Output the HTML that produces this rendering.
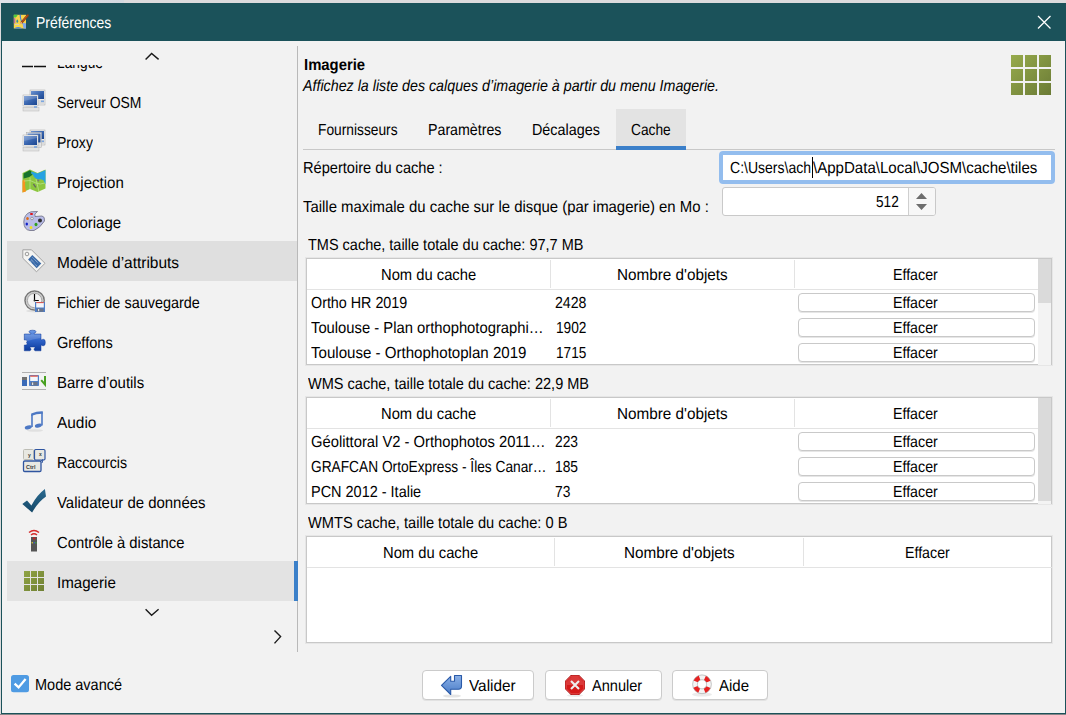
<!DOCTYPE html><html><head><meta charset="utf-8"><style>
html,body{margin:0;padding:0;width:1066px;height:715px;overflow:hidden;background:#dcdbdd}
.t{position:absolute;font-family:"Liberation Sans",sans-serif;font-size:16px;line-height:20px;white-space:nowrap;text-rendering:geometricPrecision}
svg{position:absolute;overflow:visible}
</style></head><body>
<div style="position:absolute;left:0px;top:714px;width:1066px;height:1px;background:#878587"></div>
<div style="position:absolute;left:0px;top:0px;width:124px;height:3px;background:linear-gradient(90deg,#dfe3ea,#d3d8df)"></div>
<div style="position:absolute;left:1px;top:3px;width:1065px;height:711px;background:#1b525a"></div>
<div style="position:absolute;left:2px;top:41px;width:1063px;height:672px;background:#f2f2f2"></div>
<div class="t" style="left:36.40px;top:14px;color:#fff;transform:scaleX(0.8721);transform-origin:0 0;">Préférences</div>
<div style="position:absolute;left:297px;top:46px;width:1px;height:606px;background:#b9b9b9"></div>
<div style="position:absolute;left:7px;top:241px;width:290px;height:40px;background:#dfdfdf"></div>
<div style="position:absolute;left:7px;top:561px;width:287px;height:40px;background:#e3e3e3"></div>
<div style="position:absolute;left:294px;top:561px;width:4px;height:40px;background:#3b80c9"></div>
<div style="position:absolute;left:2px;top:65px;width:295px;height:560px;overflow:hidden">
<div class="t" style="left:54.60px;top:-11px;color:#000;transform:scaleX(0.8611);transform-origin:0 0;">Langue</div>
<div class="t" style="left:54.60px;top:29px;color:#000;transform:scaleX(0.8711);transform-origin:0 0;">Serveur OSM</div>
<div class="t" style="left:54.60px;top:69px;color:#000;transform:scaleX(0.8780);transform-origin:0 0;">Proxy</div>
<div class="t" style="left:54.60px;top:109px;color:#000;transform:scaleX(0.9380);transform-origin:0 0;">Projection</div>
<div class="t" style="left:54.60px;top:149px;color:#000;transform:scaleX(0.9348);transform-origin:0 0;">Coloriage</div>
<div class="t" style="left:54.60px;top:189px;color:#000;transform:scaleX(0.9667);transform-origin:0 0;">Modèle d’attributs</div>
<div class="t" style="left:54.60px;top:229px;color:#000;transform:scaleX(0.9025);transform-origin:0 0;">Fichier de sauvegarde</div>
<div class="t" style="left:54.60px;top:269px;color:#000;transform:scaleX(0.9131);transform-origin:0 0;">Greffons</div>
<div class="t" style="left:54.60px;top:309px;color:#000;transform:scaleX(0.9333);transform-origin:0 0;">Barre d’outils</div>
<div class="t" style="left:54.60px;top:349px;color:#000;transform:scaleX(0.9634);transform-origin:0 0;">Audio</div>
<div class="t" style="left:54.60px;top:389px;color:#000;transform:scaleX(0.8848);transform-origin:0 0;">Raccourcis</div>
<div class="t" style="left:54.60px;top:429px;color:#000;transform:scaleX(0.9346);transform-origin:0 0;">Validateur de données</div>
<div class="t" style="left:54.60px;top:469px;color:#000;transform:scaleX(0.9246);transform-origin:0 0;">Contrôle à distance</div>
<div class="t" style="left:54.60px;top:509px;color:#000;transform:scaleX(0.9452);transform-origin:0 0;">Imagerie</div>
</div>
<div class="t" style="left:303.60px;top:56px;font-weight:bold;color:#000;transform:scaleX(0.9288);transform-origin:0 0;">Imagerie</div>
<div class="t" style="left:303.49px;top:77px;font-style:italic;color:#000;transform:scaleX(0.8910);transform-origin:0 0;">Affichez la liste des calques d’imagerie à partir du menu Imagerie.</div>
<div style="position:absolute;left:303px;top:149px;width:752px;height:1px;background:#c8c8c8"></div>
<div style="position:absolute;left:616px;top:109px;width:70px;height:37px;background:#e3e3e3"></div>
<div style="position:absolute;left:616px;top:146px;width:70px;height:4px;background:#3b7fc9"></div>
<div class="t" style="left:317.60px;top:121px;color:#000;transform:scaleX(0.8602);transform-origin:0 0;">Fournisseurs</div>
<div class="t" style="left:427.60px;top:121px;color:#000;transform:scaleX(0.8880);transform-origin:0 0;">Paramètres</div>
<div class="t" style="left:532.10px;top:121px;color:#000;transform:scaleX(0.8974);transform-origin:0 0;">Décalages</div>
<div class="t" style="left:630.60px;top:121px;color:#000;transform:scaleX(0.8587);transform-origin:0 0;">Cache</div>
<div class="t" style="left:303.20px;top:159px;color:#000;transform:scaleX(0.9131);transform-origin:0 0;">Répertoire du cache :</div>
<div style="position:absolute;left:719px;top:151px;width:336px;height:33px;background:#fff;border-radius:4px;box-shadow:inset 0 0 0 4px #93bdee"></div>
<div class="t" style="left:729.60px;top:159px;color:#000;transform:scaleX(0.8763);transform-origin:0 0;">C:\Users\ach</div>
<div class="t" style="left:812.60px;top:159px;color:#000;transform:scaleX(0.9414);transform-origin:0 0;">\AppData\Local\JOSM\cache\tiles</div>
<div style="position:absolute;left:812px;top:157px;width:1px;height:21px;background:#000"></div>
<div class="t" style="left:302.60px;top:198px;color:#000;transform:scaleX(0.9312);transform-origin:0 0;">Taille maximale du cache sur le disque (par imagerie) en Mo :</div>
<div style="position:absolute;left:722px;top:187px;width:214px;height:29px;background:#fff;border:1px solid #c9c9c9;border-radius:3px;box-sizing:border-box"></div>
<div style="position:absolute;left:908px;top:188px;width:27px;height:27px;background:#f7f7f7;border-left:1px solid #cfcfcf;border-radius:0 2px 2px 0;box-sizing:border-box"></div>
<div class="t" style="left:875.50px;top:193px;color:#000;transform:scaleX(0.8519);transform-origin:0 0;">512</div>
<div class="t" style="left:308.10px;top:236px;color:#000;transform:scaleX(0.9053);transform-origin:0 0;">TMS cache, taille totale du cache: 97,7 MB</div>
<div style="position:absolute;left:305px;top:257px;width:748px;height:109px;background:#e6e6e6"></div>
<div style="position:absolute;left:306px;top:258px;width:746px;height:107px;background:#fff;box-shadow:inset 0 0 0 1px #c8c8c8"></div>
<div style="position:absolute;left:307px;top:289px;width:731px;height:1px;background:#e3e3e3"></div>
<div style="position:absolute;left:550px;top:260px;width:1px;height:28px;background:#e3e3e3"></div>
<div style="position:absolute;left:794px;top:260px;width:1px;height:28px;background:#e3e3e3"></div>
<div class="t" style="left:380.50px;top:266px;color:#000;transform:scaleX(0.9223);transform-origin:0 0;">Nom du cache</div>
<div class="t" style="left:616.65px;top:266px;color:#000;transform:scaleX(0.9543);transform-origin:0 0;">Nombre d'objets</div>
<div class="t" style="left:893.35px;top:266px;color:#000;transform:scaleX(0.8882);transform-origin:0 0;">Effacer</div>
<div style="position:absolute;left:1038px;top:259px;width:13px;height:106px;background:#f3f3f3"></div>
<div style="position:absolute;left:1038px;top:259px;width:13px;height:44px;background:#dadada"></div>
<div class="t" style="left:311.10px;top:294px;color:#000;transform:scaleX(0.8944);transform-origin:0 0;">Ortho HR 2019</div>
<div class="t" style="left:555.30px;top:294px;color:#000;transform:scaleX(0.8833);transform-origin:0 0;">2428</div>
<div style="position:absolute;left:798px;top:293px;width:237px;height:19px;background:#fff;border:1px solid #c9c9c9;border-radius:4px;box-sizing:border-box;box-shadow:0 1px 0 #e6e6e6"></div>
<div class="t" style="left:893.35px;top:294px;color:#000;transform:scaleX(0.8882);transform-origin:0 0;">Effacer</div>
<div class="t" style="left:311.10px;top:319px;color:#000;transform:scaleX(0.9238);transform-origin:0 0;">Toulouse - Plan orthophotographi…</div>
<div class="t" style="left:556.30px;top:319px;color:#000;transform:scaleX(0.8556);transform-origin:0 0;">1902</div>
<div style="position:absolute;left:798px;top:318px;width:237px;height:19px;background:#fff;border:1px solid #c9c9c9;border-radius:4px;box-sizing:border-box;box-shadow:0 1px 0 #e6e6e6"></div>
<div class="t" style="left:893.35px;top:319px;color:#000;transform:scaleX(0.8882);transform-origin:0 0;">Effacer</div>
<div class="t" style="left:311.10px;top:344px;color:#000;transform:scaleX(0.9424);transform-origin:0 0;">Toulouse - Orthophotoplan 2019</div>
<div class="t" style="left:556.20px;top:344px;color:#000;transform:scaleX(0.8500);transform-origin:0 0;">1715</div>
<div style="position:absolute;left:798px;top:343px;width:237px;height:19px;background:#fff;border:1px solid #c9c9c9;border-radius:4px;box-sizing:border-box;box-shadow:0 1px 0 #e6e6e6"></div>
<div class="t" style="left:893.35px;top:344px;color:#000;transform:scaleX(0.8882);transform-origin:0 0;">Effacer</div>
<div class="t" style="left:308.10px;top:375px;color:#000;transform:scaleX(0.9081);transform-origin:0 0;">WMS cache, taille totale du cache: 22,9 MB</div>
<div style="position:absolute;left:305px;top:396px;width:748px;height:109px;background:#e6e6e6"></div>
<div style="position:absolute;left:306px;top:397px;width:746px;height:107px;background:#fff;box-shadow:inset 0 0 0 1px #c8c8c8"></div>
<div style="position:absolute;left:307px;top:428px;width:731px;height:1px;background:#e3e3e3"></div>
<div style="position:absolute;left:550px;top:399px;width:1px;height:28px;background:#e3e3e3"></div>
<div style="position:absolute;left:794px;top:399px;width:1px;height:28px;background:#e3e3e3"></div>
<div class="t" style="left:380.50px;top:405px;color:#000;transform:scaleX(0.9223);transform-origin:0 0;">Nom du cache</div>
<div class="t" style="left:616.65px;top:405px;color:#000;transform:scaleX(0.9543);transform-origin:0 0;">Nombre d'objets</div>
<div class="t" style="left:893.35px;top:405px;color:#000;transform:scaleX(0.8882);transform-origin:0 0;">Effacer</div>
<div style="position:absolute;left:1038px;top:398px;width:13px;height:106px;background:#f3f3f3"></div>
<div style="position:absolute;left:1038px;top:398px;width:13px;height:103px;background:#dadada"></div>
<div class="t" style="left:311.10px;top:433px;color:#000;transform:scaleX(0.9228);transform-origin:0 0;">Géolittoral V2 - Orthophotos 2011…</div>
<div class="t" style="left:554.90px;top:433px;color:#000;transform:scaleX(0.8630);transform-origin:0 0;">223</div>
<div style="position:absolute;left:798px;top:432px;width:237px;height:19px;background:#fff;border:1px solid #c9c9c9;border-radius:4px;box-sizing:border-box;box-shadow:0 1px 0 #e6e6e6"></div>
<div class="t" style="left:893.35px;top:433px;color:#000;transform:scaleX(0.8882);transform-origin:0 0;">Effacer</div>
<div class="t" style="left:311.10px;top:458px;color:#000;transform:scaleX(0.8575);transform-origin:0 0;">GRAFCAN OrtoExpress - Îles Canar…</div>
<div class="t" style="left:554.90px;top:458px;color:#000;transform:scaleX(0.8630);transform-origin:0 0;">185</div>
<div style="position:absolute;left:798px;top:457px;width:237px;height:19px;background:#fff;border:1px solid #c9c9c9;border-radius:4px;box-sizing:border-box;box-shadow:0 1px 0 #e6e6e6"></div>
<div class="t" style="left:893.35px;top:458px;color:#000;transform:scaleX(0.8882);transform-origin:0 0;">Effacer</div>
<div class="t" style="left:311.10px;top:483px;color:#000;transform:scaleX(0.9041);transform-origin:0 0;">PCN 2012 - Italie</div>
<div class="t" style="left:554.90px;top:483px;color:#000;transform:scaleX(0.8611);transform-origin:0 0;">73</div>
<div style="position:absolute;left:798px;top:482px;width:237px;height:19px;background:#fff;border:1px solid #c9c9c9;border-radius:4px;box-sizing:border-box;box-shadow:0 1px 0 #e6e6e6"></div>
<div class="t" style="left:893.35px;top:483px;color:#000;transform:scaleX(0.8882);transform-origin:0 0;">Effacer</div>
<div class="t" style="left:308.10px;top:514px;color:#000;transform:scaleX(0.9144);transform-origin:0 0;">WMTS cache, taille totale du cache: 0 B</div>
<div style="position:absolute;left:305px;top:535px;width:748px;height:109px;background:#e6e6e6"></div>
<div style="position:absolute;left:306px;top:536px;width:746px;height:107px;background:#fff;box-shadow:inset 0 0 0 1px #c8c8c8"></div>
<div style="position:absolute;left:307px;top:567px;width:745px;height:1px;background:#e3e3e3"></div>
<div style="position:absolute;left:554px;top:538px;width:1px;height:28px;background:#e3e3e3"></div>
<div style="position:absolute;left:803px;top:538px;width:1px;height:28px;background:#e3e3e3"></div>
<div class="t" style="left:382.83px;top:544px;color:#000;transform:scaleX(0.9223);transform-origin:0 0;">Nom du cache</div>
<div class="t" style="left:623.65px;top:544px;color:#000;transform:scaleX(0.9543);transform-origin:0 0;">Nombre d'objets</div>
<div class="t" style="left:905.02px;top:544px;color:#000;transform:scaleX(0.8882);transform-origin:0 0;">Effacer</div>
<div class="t" style="left:34.60px;top:676px;color:#000;transform:scaleX(0.9062);transform-origin:0 0;">Mode avancé</div>
<div style="position:absolute;left:422px;top:670px;width:112px;height:30px;background:#fff;border:1px solid #cbcbcb;border-radius:4px;box-sizing:border-box;box-shadow:0 1px 0 #e2e2e2"></div>
<div class="t" style="left:468.60px;top:677px;color:#000;transform:scaleX(0.9592);transform-origin:0 0;">Valider</div>
<div style="position:absolute;left:545px;top:670px;width:117px;height:30px;background:#fff;border:1px solid #cbcbcb;border-radius:4px;box-sizing:border-box;box-shadow:0 1px 0 #e2e2e2"></div>
<div class="t" style="left:591.60px;top:677px;color:#000;transform:scaleX(0.9107);transform-origin:0 0;">Annuler</div>
<div style="position:absolute;left:672px;top:670px;width:96px;height:30px;background:#fff;border:1px solid #cbcbcb;border-radius:4px;box-sizing:border-box;box-shadow:0 1px 0 #e2e2e2"></div>
<div class="t" style="left:718.60px;top:677px;color:#000;transform:scaleX(0.9375);transform-origin:0 0;">Aide</div>
<svg style="left:0;top:0" width="1066" height="715" viewBox="0 0 1066 715">
<defs>
<linearGradient id="scr" x1="0" y1="0" x2="1" y2="1"><stop offset="0" stop-color="#6f95d2"/><stop offset="0.5" stop-color="#3a66b0"/><stop offset="1" stop-color="#1a4590"/></linearGradient>
<linearGradient id="olive_b" gradientUnits="userSpaceOnUse" x1="1011" y1="55" x2="1051" y2="95"><stop offset="0" stop-color="#97ab4c"/><stop offset="1" stop-color="#6b7b36"/></linearGradient><linearGradient id="olive_s" gradientUnits="userSpaceOnUse" x1="24" y1="571" x2="44" y2="591"><stop offset="0" stop-color="#90a444"/><stop offset="1" stop-color="#6f8034"/></linearGradient>
<linearGradient id="puz" x1="0" y1="0" x2="0" y2="1"><stop offset="0" stop-color="#6f9be6"/><stop offset="0.5" stop-color="#2f63c8"/><stop offset="1" stop-color="#0c3a9c"/></linearGradient>
<linearGradient id="chk" x1="0" y1="0" x2="0" y2="1"><stop offset="0" stop-color="#2a6a90"/><stop offset="1" stop-color="#154868"/></linearGradient>
<linearGradient id="arr" x1="0" y1="0" x2="0" y2="1"><stop offset="0" stop-color="#8ab0e6"/><stop offset="1" stop-color="#4a7cc8"/></linearGradient>
<radialGradient id="clk" cx="0.5" cy="0.5" r="0.5"><stop offset="0.7" stop-color="#f2f2f2"/><stop offset="1" stop-color="#d0d0d0"/></radialGradient>
</defs>
<rect x="13.8" y="14.8" width="12.2" height="13.7" fill="#f7d44a"/>
<path d="M13.8 14.8 H17.8 Q17.2 16.5 15.8 17.4 L13.8 17.6 Z" fill="#4ccb40"/>
<path d="M13.8 18.2 H15.3 V23.4 H13.8 Z" fill="#b86fa0"/>
<ellipse cx="17.3" cy="21.2" rx="0.9" ry="1.6" fill="#3d8a98"/>
<path d="M19.6 14.8 H20.8 Q20.6 18 22 21 L21 21.5 Q19.6 18.5 19.6 14.8 Z" fill="#3f7fd8"/>
<path d="M22 22.5 Q24 23.5 26 23.2 V28.5 H23.5 Q23 25 22 22.5 Z" fill="#7fa8ea"/>
<path d="M14.5 28.5 Q15 26.8 18.5 27 Q21 27.3 22.5 28.5 Z" fill="#4a86e0"/>
<path d="M15 24 H19 V25 H15 Z" fill="#c8d0d8" opacity="0.8"/>
<path d="M27.6 15.4 L21.6 22.6" stroke="#984210" stroke-width="2.4" stroke-linecap="round"/>
<path d="M27.2 15.6 L22 21.8" stroke="#c8642a" stroke-width="0.7"/>
<circle cx="21.2" cy="23" r="0.9" fill="#e6b48a"/>
<path d="M1038 16L1050.5 28.5M1050.5 16L1038 28.5" stroke="#fff" stroke-width="1.25"/>
<path d="M145.6 59.4L151.6 53.4L158.6 59.4" stroke="#1a1a1a" stroke-width="1.4" fill="none"/>
<path d="M145.6 609.2L151.6 615.2L158.6 609.2" stroke="#1a1a1a" stroke-width="1.4" fill="none"/>
<path d="M274.5 630.4L280.6 636.6L274.5 643.4" stroke="#1a1a1a" stroke-width="1.4" fill="none"/>
<path d="M22 66.5h11M34 66.5h12" stroke="#111" stroke-width="1.6"/>
<rect x="30" y="90" width="15" height="15" fill="#ececec" stroke="#a8a8a8" stroke-width="0.5"/><rect x="31" y="91" width="13" height="8" fill="url(#scr)"/><rect x="31" y="100" width="13" height="4" fill="#dcdcdc"/><rect x="41" y="100.5" width="3" height="1.6" fill="#7aa6e0"/>
<rect x="23" y="95" width="15" height="11" fill="#f4f4f4"/><rect x="23" y="95" width="15" height="11" fill="none" stroke="#a8a8a8" stroke-width="0.5"/><rect x="24" y="96" width="13" height="9" fill="url(#scr)"/><path d="M24 101 L37 98 V96 H24Z" fill="#fff" opacity="0.18"/><path d="M26 106 H35 L36 107.5 H25Z" fill="#d8d8d8"/><rect x="23" y="107.5" width="16" height="3.5" fill="#e2e2e2" stroke="#b8b8b8" stroke-width="0.5"/><rect x="34" y="106.2" width="3" height="1.6" fill="#7aa6e0"/>
<rect x="30" y="130" width="15" height="15" fill="#ececec" stroke="#a8a8a8" stroke-width="0.5"/><rect x="31" y="131" width="13" height="8" fill="url(#scr)"/><rect x="31" y="140" width="13" height="4" fill="#dcdcdc"/><rect x="41" y="140.5" width="3" height="1.6" fill="#7aa6e0"/>
<rect x="26.5" y="132.5" width="15" height="15" fill="#ececec" stroke="#a8a8a8" stroke-width="0.5"/><rect x="27.5" y="133.5" width="13" height="9" fill="url(#scr)"/><rect x="27.5" y="143" width="13" height="4" fill="#dcdcdc"/>
<rect x="23" y="135" width="15" height="11" fill="#f4f4f4"/><rect x="23" y="135" width="15" height="11" fill="none" stroke="#a8a8a8" stroke-width="0.5"/><rect x="24" y="136" width="13" height="9" fill="url(#scr)"/><path d="M24 141 L37 138 V136 H24Z" fill="#fff" opacity="0.18"/><path d="M26 146 H35 L36 147.5 H25Z" fill="#d8d8d8"/><rect x="23" y="147.5" width="16" height="3.5" fill="#e2e2e2" stroke="#b8b8b8" stroke-width="0.5"/><rect x="34" y="146.2" width="3" height="1.6" fill="#7aa6e0"/>
<path d="M22.5 173 L30 169.5 L37.5 173 L45.5 169.5 L45.5 188.5 L37.5 192 L30 189 L22.5 192.5 Z" fill="#8cc63e"/>
<path d="M23.6 173.4 L29.8 170.3 L31.6 171.4 Q30.6 173.6 32.8 174.6 Q30 177.2 26.6 177.8 L23.6 178.6 Z" fill="#17732c"/>
<path d="M31.6 171.4 L37.5 173.6 L45.5 170 V184 Q43.8 183.2 44.2 181 Q42 178.4 38.2 179.6 Q34.2 178.6 32.8 174.6 Q30.6 173.6 31.6 171.4 Z" fill="#26a2e2"/>
<path d="M22.5 180.5 L25.2 179.6 Q24.6 186 26 191.4 L22.5 192.5 Z" fill="#f7931e"/>
<path d="M24 181 Q30 179 36 183 Q40 185 45 183 M30 177.5 L30 189 M36 179 L39 192" stroke="#c4e89a" stroke-width="0.7" fill="none" opacity="0.9"/>
<path d="M33.4 184 l1.2 1.6 l1.2 1.8" stroke="#666" stroke-width="1.3"/><path d="M37.6 179.6 l1.3 1.6" stroke="#777" stroke-width="1.4"/>
<path d="M37.5 211.5 L31 211.8 Q24 214 23.8 222 Q24 230 30 230.5 L34 230.5 Q40 228 44.5 221 Q45 216.5 42 216 L35 216.5 Q33.5 214 37.5 211.5 Z" fill="#b9bde8" stroke="#6c6c80" stroke-width="0.8"/>
<circle cx="32" cy="218.5" r="1.3" fill="#f0f0f0" stroke="#777" stroke-width="0.6"/>
<ellipse cx="31.5" cy="214" rx="1.6" ry="1.1" fill="#e01010"/>
<ellipse cx="27.5" cy="218.5" rx="1.3" ry="1.6" fill="#e06a10"/>
<ellipse cx="26.8" cy="224" rx="1.2" ry="1.6" fill="#1020c8"/>
<ellipse cx="31" cy="227.5" rx="1.4" ry="1.5" fill="#f0e020"/>
<ellipse cx="36" cy="224.5" rx="1.5" ry="1.7" fill="#30a020"/>
<circle cx="40" cy="220.5" r="2" fill="#303030"/>
<path d="M22.8 249.8 L31.5 249.8 L45 263.3 L36.5 271.8 L22.8 258.2 Z" fill="#f4f4f2" stroke="#a2a2a2" stroke-width="1" stroke-linejoin="round"/>
<circle cx="27" cy="254" r="1.8" fill="none" stroke="#9a9a9a" stroke-width="1"/>
<path d="M28.1 259.4 L32.3 255.1 L41.3 263.6 L36.7 268.3 Z" fill="#3a6aa8"/>
<path d="M32.6 257.6 l5.5 5.3 M31.1 259.6 l3.2 3.1 M30.2 261 l1.6 1.5 M34.8 264.1 l2.2 2.1" stroke="#d8e4f2" stroke-width="0.75" stroke-dasharray="1 0.7"/>
<ellipse cx="35" cy="311" rx="9" ry="1.5" fill="#000" opacity="0.08"/>
<circle cx="34.6" cy="300.5" r="9.6" fill="url(#clk)" stroke="#777" stroke-width="1.5"/>
<circle cx="34.6" cy="300.5" r="8.2" fill="none" stroke="#c8c8c8" stroke-width="1.2"/>
<circle cx="34.6" cy="300.5" r="7.2" fill="none" stroke="#8a8a8a" stroke-width="0.7"/>
<path d="M34.5 300.5 V294 M34.5 300.5 H38.8" stroke="#000" stroke-width="1.2"/>
<circle cx="34.5" cy="300.5" r="0.9" fill="#333"/>
<rect x="35" y="302" width="10" height="10" fill="#4f7fc8"/>
<rect x="36.2" y="302.5" width="7.6" height="5" fill="#f4f6fa"/>
<rect x="36.2" y="302.2" width="7.6" height="0.9" fill="#e04030"/>
<rect x="37" y="308.5" width="6.5" height="3.2" fill="#6a7488"/><rect x="38" y="309" width="1.2" height="2.2" fill="#dde2ea"/>
<path d="M24.3 334 H30.8 V333.2 Q29 332.8 29 331.6 Q29 330.2 32.5 330.2 Q36 330.2 36 331.6 Q36 332.8 34.2 333.2 V334 H41 V339.8 H41.8 Q42.2 339.3 43.5 339.3 Q45.3 339.3 45.3 342.5 Q45.3 345.7 43.5 345.7 Q42.2 345.7 41.8 345.2 H41 V350.8 H35 Q34 350 34 349.2 Q34 348.3 35 348 L35 347 H30 V348 Q31 348.3 31 349.2 Q31 350 30 350.8 H24.3 V345 Q26.5 345.3 27 344.6 Q27.3 344 27 343.5 L26.5 342.5 L27 341.5 Q27.3 341 27 340.4 Q26.5 339.7 24.3 340 Z" fill="url(#puz)" stroke="#103a98" stroke-width="0.5"/>
<path d="M24.8 334.5 H40.5 V338 Q33 339 24.8 342 Z" fill="#fff" opacity="0.15"/>
<path d="M22 372.5 H46 M22 389.5 H46" stroke="#b0b0b0" stroke-width="1.2"/>
<rect x="22" y="377" width="5" height="3" fill="#707070"/><rect x="22" y="380" width="5" height="6" fill="#3a6ab8"/>
<rect x="29" y="375" width="10" height="11" rx="0.8" fill="#4f7fc8"/><rect x="30.2" y="375.8" width="7.6" height="5.2" fill="#f4f6fa"/><rect x="30.2" y="375.6" width="7.6" height="1" fill="#e03020"/><rect x="31" y="382" width="6.5" height="3.5" fill="#6a7488"/><rect x="32" y="382.5" width="1.2" height="2.5" fill="#dde2ea"/>
<path d="M41.2 380.2 L45 384.5 V376" stroke="#48a020" stroke-width="2" fill="none" stroke-linejoin="miter"/>
<ellipse cx="35" cy="430.5" rx="8" ry="1.3" fill="#000" opacity="0.07"/>
<path d="M32 414.5 V427 M42 412.3 V425.5" stroke="#4d78c4" stroke-width="1.6" fill="none"/>
<path d="M31.2 413.5 Q37 411 42.8 411.2 V413.8 Q37 413.6 31.2 416 Z" fill="#4d78c4"/>
<ellipse cx="28.3" cy="427.3" rx="3.6" ry="1.9" fill="#4d78c4" transform="rotate(-14 28.3 427.3)"/>
<ellipse cx="38.4" cy="425.6" rx="3.6" ry="1.9" fill="#4d78c4" transform="rotate(-14 38.4 425.6)"/>
<rect x="23.5" y="449.5" width="10" height="10" rx="1" fill="#e8e8e2" stroke="#bdbdb5" stroke-width="1"/>
<rect x="34.5" y="449.5" width="10.5" height="10.5" rx="1.2" fill="#e8e8e2" stroke="#2f55a0" stroke-width="1.2"/>
<rect x="23.5" y="461" width="17.5" height="10.5" rx="1.2" fill="#e8e8e2" stroke="#2f55a0" stroke-width="1.3"/>
<path d="M41 461 L43 459.5 L42 463" stroke="#2f55a0" stroke-width="1" fill="none"/>
<text x="28" y="457" font-family="Liberation Sans" font-size="5" font-weight="bold" fill="#3a3a3a">y</text><text x="39" y="456" font-family="Liberation Sans" font-size="5" font-weight="bold" fill="#3a3a3a">x</text><text x="26" y="469" font-family="Liberation Sans" font-size="5.5" font-weight="bold" fill="#3a3a3a">Ctrl</text>
<path d="M22.3 503.9 L27 500.5 L31.4 505.5 Q37 495 44.9 489.1 L46 496.5 Q38 502 32.1 512.6 Z" fill="url(#chk)"/>
<rect x="31" y="537" width="6" height="14.5" fill="#555"/>
<rect x="33" y="537.5" width="2.5" height="1.8" fill="#c82020"/>
<rect x="31.6" y="542" width="1.4" height="1.4" fill="#c8c030"/><rect x="33.5" y="542" width="1.4" height="1.4" fill="#4060c0"/><rect x="35.2" y="542" width="1.4" height="1.4" fill="#40a040"/>
<path d="M29 532.5 Q34 528.5 39 532.5" stroke="#d42a2a" stroke-width="1.5" fill="none"/><path d="M31 535 Q34 532.5 37 535" stroke="#d42a2a" stroke-width="1.5" fill="none"/>
<rect x="24" y="571" width="6" height="6" fill="url(#olive_s)"/>
<rect x="31" y="571" width="6" height="6" fill="url(#olive_s)"/>
<rect x="38" y="571" width="6" height="6" fill="url(#olive_s)"/>
<rect x="24" y="578" width="6" height="6" fill="url(#olive_s)"/>
<rect x="31" y="578" width="6" height="6" fill="url(#olive_s)"/>
<rect x="38" y="578" width="6" height="6" fill="url(#olive_s)"/>
<rect x="24" y="585" width="6" height="6" fill="url(#olive_s)"/>
<rect x="31" y="585" width="6" height="6" fill="url(#olive_s)"/>
<rect x="38" y="585" width="6" height="6" fill="url(#olive_s)"/>
<rect x="1011" y="55" width="12" height="12" fill="url(#olive_b)"/>
<rect x="1025" y="55" width="12" height="12" fill="url(#olive_b)"/>
<rect x="1039" y="55" width="12" height="12" fill="url(#olive_b)"/>
<rect x="1011" y="69" width="12" height="12" fill="url(#olive_b)"/>
<rect x="1025" y="69" width="12" height="12" fill="url(#olive_b)"/>
<rect x="1039" y="69" width="12" height="12" fill="url(#olive_b)"/>
<rect x="1011" y="83" width="12" height="12" fill="url(#olive_b)"/>
<rect x="1025" y="83" width="12" height="12" fill="url(#olive_b)"/>
<rect x="1039" y="83" width="12" height="12" fill="url(#olive_b)"/>
<path d="M921.5 193 L927 199 H916 Z M916 204 H927 L921.5 210 Z" fill="#6e6e6e"/>
<rect x="11" y="675" width="18" height="17.3" rx="2.5" fill="#4f9be3"/>
<path d="M14.6 683.6 L18.6 687.4 L25.6 678.9" stroke="#fff" stroke-width="2.3" fill="none"/>
<ellipse cx="452" cy="696" rx="9" ry="1.6" fill="#000" opacity="0.1"/>
<path d="M441.5 685.3 L450.7 676.3 V681.3 H454.5 V675.5 H461.5 V686 Q461.5 689.2 458.5 689.2 H450.7 V694.5 Z" fill="url(#arr)" stroke="#2a5aa8" stroke-width="1.1" stroke-linejoin="round"/>
<ellipse cx="575" cy="695.5" rx="8" ry="1.5" fill="#000" opacity="0.08"/>
<path d="M570.9 675 H579.1 L585 680.9 V689.1 L579.1 695 H570.9 L565 689.1 V680.9 Z" fill="#a00000"/>
<path d="M571.3 676 H578.7 L584 681.3 V688.7 L578.7 694 H571.3 L566 688.7 V681.3 Z" fill="#d41a1a" stroke="#f06a6a" stroke-width="0.8"/>
<path d="M571.6 677 H578.4 L583 681.6 V685 H567 V681.6 Z" fill="#fff" opacity="0.14"/>
<path d="M571 681 L579 689 M579 681 L571 689" stroke="#eeeeee" stroke-width="2.1"/>
<ellipse cx="702" cy="694.5" rx="10" ry="2" fill="#000" opacity="0.08"/>
<circle cx="702" cy="684.3" r="7" fill="none" stroke="#f4f4f4" stroke-width="4.6"/>
<circle cx="702" cy="684.3" r="7" fill="none" stroke="#e82020" stroke-width="4.6" stroke-dasharray="5.5 5.5" stroke-dashoffset="2.75" transform="rotate(-45 702 684.3)"/>
<circle cx="702" cy="684.3" r="9.4" fill="none" stroke="#a0a0a0" stroke-width="0.6"/>
<circle cx="702" cy="684.3" r="4.6" fill="none" stroke="#a0a0a0" stroke-width="0.6"/>
</svg>
</body></html>
